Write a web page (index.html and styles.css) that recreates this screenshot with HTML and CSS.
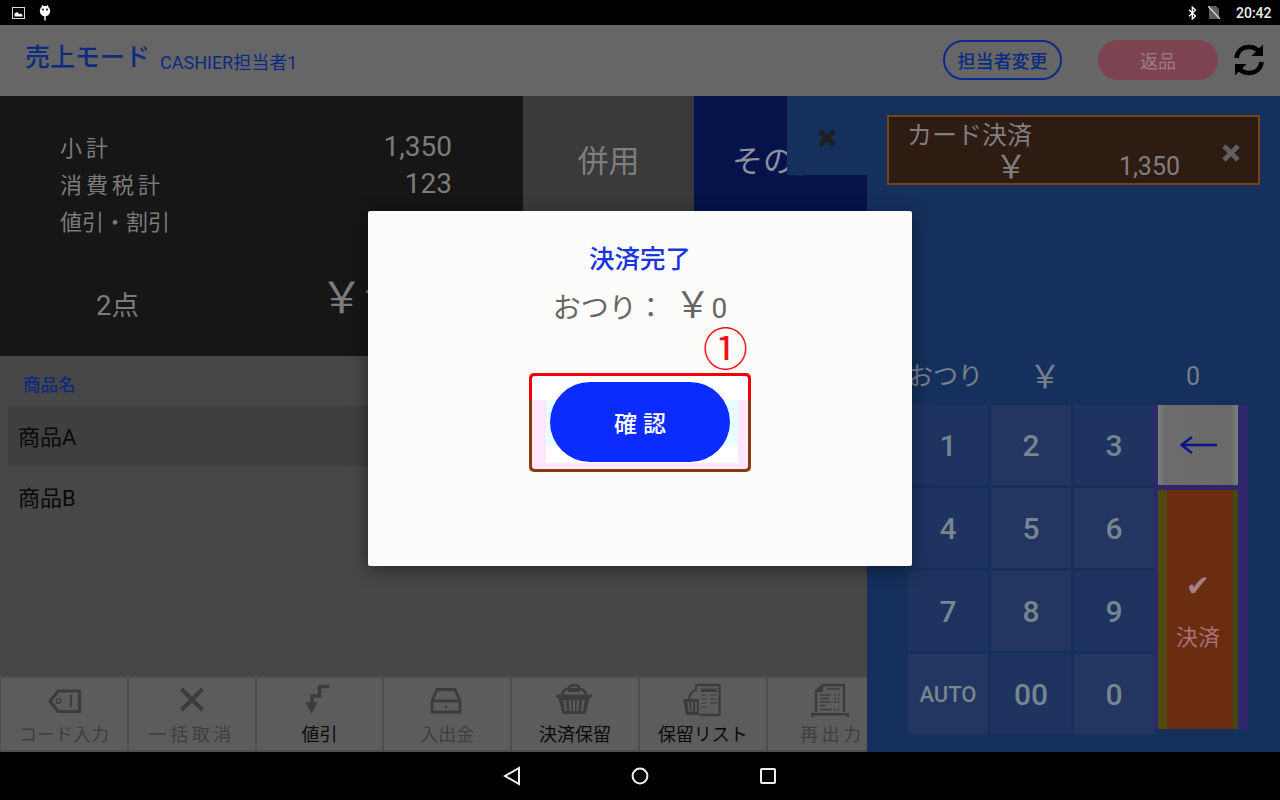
FILE: index.html
```html
<!DOCTYPE html>
<html lang="ja">
<head>
<meta charset="utf-8">
<title>売上モード</title>
<link rel="stylesheet" href="styles.css">
</head>
<body>
<div class="app">
  <div class="status">
    <svg class="st-img" viewBox="0 0 13 12"><rect x=".5" y=".5" width="12" height="11" fill="none" stroke="#ddd"/><path d="M2.5 9.5V6.5L5 5l2 2 1.5-.5L10.5 8v1.5z" fill="#fff"/></svg>
    <svg class="st-droid" viewBox="0 0 12 16"><circle cx="6" cy="6" r="5.2" fill="#fff"/><circle cx="4" cy="4.5" r="1" fill="#000"/><circle cx="8" cy="4.5" r="1" fill="#000"/><path d="M6 10v5.5M3 .5l1.5 2M9 .5 7.500 2.500" stroke="#fff" stroke-width="1.400"/></svg>
    <div class="st-space"></div>
    <svg class="st-bt" viewBox="0 0 9 14"><path d="M1 3.800 7.500 10 4.300 13V1l3.200 3L1 10.200" fill="none" stroke="#fff" stroke-width="1.300"/></svg>
    <svg class="st-sim" viewBox="0 0 12 13"><path d="M1 0H8L11 3V13H1z" fill="#5e5e5e"/><path d="M0 0 12 13" stroke="#ddd" stroke-width="1.300"/></svg>
    <span class="st-time">20:42</span>
  </div>

  <header class="head">
    <span class="head-title">売上モード</span>
    <span class="head-user">CASHIER担当者1</span>
    <div class="head-space"></div>
    <span class="btn-outline">担当者変更</span>
    <span class="btn-return">返品</span>
    <svg class="sync" viewBox="0 0 32 34"><path d="M3.500 15C4 8 9.500 4 16 4c4 0 7.500 1.500 10 4.500" fill="none" stroke="#000" stroke-width="4.500"/><path d="M30 1.500V13H18.500z" fill="#000"/><path d="M28.500 19C28 26 22.500 30 16 30c-4 0-7.500-1.500-10-4.500" fill="none" stroke="#000" stroke-width="4.500"/><path d="M2 32.500V21h11.500z" fill="#000"/></svg>
  </header>

  <main class="main">
    <section class="left">
      <div class="top">
        <div class="totals">
          <div class="t-row"><span class="t-lab sp">小計</span><span class="t-num">1,350</span></div>
          <div class="t-row"><span class="t-lab sp">消費税計</span><span class="t-num">123</span></div>
          <div class="t-row"><span class="t-lab">値引・割引</span><span class="t-num"></span></div>
          <div class="t-sum"><span class="t-count">2点</span><span class="t-total"><span class="yen">￥</span>1,350</span></div>
        </div>
        <div class="tab-mix">併用</div>
        <div class="tab-other">その他</div>
      </div>
      <div class="list">
        <div class="list-head">商品名</div>
        <div class="row row-on">商品A</div>
        <div class="row">商品B</div>
      </div>
      <nav class="tools">
        <div class="tool">
          <svg class="ti" viewBox="0 0 40 36"><path d="M14 9H35.500V29.500H14L6 19.200z" fill="none" stroke="#3c3c3c" stroke-width="3.200"/><circle cx="14.500" cy="19" r="2.300" fill="none" stroke="#3c3c3c" stroke-width="1.200"/><path d="M27 13V25" stroke="#3c3c3c" stroke-width="1.800"/></svg>
          <span class="tl tl-dim">コード入力</span>
        </div>
        <div class="tool">
          <svg class="ti" viewBox="0 0 40 36"><path d="M9.500 7 30.500 28M30.500 7 9.500 28" stroke="#3c3c3c" stroke-width="4"/></svg>
          <span class="tl tl-dim tl-wide">一括取消</span>
        </div>
        <div class="tool">
          <svg class="ti" viewBox="0 0 40 36"><path d="M30 4.500H20.500V14H13V22" fill="none" stroke="#3c3c3c" stroke-width="3.600"/><path d="M6.500 20H18.500L12.500 32z" fill="#3c3c3c"/></svg>
          <span class="tl">値引</span>
        </div>
        <div class="tool">
          <svg class="ti" viewBox="0 0 40 36"><path d="M10 7.500H28L33 19V30H5V19z M5 19H33" fill="none" stroke="#3c3c3c" stroke-width="2.800"/><circle cx="19" cy="25" r="1.300" fill="#3c3c3c"/></svg>
          <span class="tl tl-dim">入出金</span>
        </div>
        <div class="tool">
          <svg class="ti" viewBox="0 0 40 36"><path d="M7 13C8 8 11 7 13 7 14 3.500 16 3 19 3s5 .5 6 4c2 0 5 1 6 6" fill="none" stroke="#3c3c3c" stroke-width="2.600"/><path d="M13 8H25" stroke="#3c3c3c" stroke-width="4"/><path d="M1 14H37" stroke="#3c3c3c" stroke-width="3"/><path d="M3 15 7.500 32H30.500L35 15z" fill="#3c3c3c"/><path d="M9.500 18 11 29M15 18 15.700 29M19 18V29M23 18 22.300 29M28.500 18 27 29" stroke="#5c5c5c" stroke-width="2"/></svg>
          <span class="tl">決済保留</span>
        </div>
        <div class="tool">
          <svg class="ti" viewBox="0 0 40 36"><path d="M6 17C7 11 9 9 13 8V3h3" fill="none" stroke="#3c3c3c" stroke-width="2.200"/><path d="M0 17H16V33H3z" fill="#3c3c3c"/><path d="M5 20 6.500 30M9 20V30M13 20V30" stroke="#5c5c5c" stroke-width="1.600"/><path d="M16 3H36.500V33H16" fill="none" stroke="#3c3c3c" stroke-width="2.400"/><path d="M18 6.500H34V10H18z" fill="#3c3c3c"/><path d="M18 13H24M18 17H24M18 21H24M18 25H24M27 13H34M27 17H34M27 21H34" stroke="#3c3c3c" stroke-width="1.200"/></svg>
          <span class="tl">保留リスト</span>
        </div>
        <div class="tool">
          <svg class="ti" viewBox="0 0 40 36"><path d="M5 30V9L12 3H33V30" fill="none" stroke="#3c3c3c" stroke-width="2.400"/><path d="M5 10H12V3z" fill="#3c3c3c"/><path d="M0 31H38V35H35V33.500H3V35H0z" fill="#3c3c3c"/><path d="M16 7H29" stroke="#3c3c3c" stroke-width="1.500"/><path d="M9 13H20M9 16.500H18M9 20H20M9 23.500H14M9 27.500H21" stroke="#3c3c3c" stroke-width="1.600"/><path d="M23 13H30M23 16.500H30M23 20H30M23 27.500H30" stroke="#3c3c3c" stroke-width="1.600" stroke-dasharray="2 1.500"/></svg>
          <span class="tl tl-dim tl-wide tl-last">再出力</span>
        </div>
      </nav>
    </section>

    <aside class="panel">
      <div class="panel-tab"><svg class="x-dark" viewBox="0 0 18 18"><path d="M2 2 16 16M16 2 2 16" stroke="#1e1e1e" stroke-width="4.800"/></svg></div>
      <div class="card">
        <div class="card-body">
          <div class="card-title">カード決済</div>
          <div class="card-amt"><span class="yen">￥</span><span>1,350</span></div>
        </div>
        <svg class="x-grey" viewBox="0 0 18 18"><path d="M2 2 16 16M16 2 2 16" stroke="#5f5f5f" stroke-width="4.800"/></svg>
      </div>
      <div class="change"><span class="c-label">おつり</span><span class="c-yen yen">￥</span><span class="c-val">0</span></div>
      <div class="pad">
        <div class="key">1</div><div class="key key-b">2</div><div class="key">3</div>
        <div class="actions">
          <div class="back"><svg class="back-ic" viewBox="0 0 38 20"><path d="M38 10H3M13 2 2.500 10 13 18" fill="none" stroke="#0b128c" stroke-width="2.400"/></svg></div>
          <div class="settle"><span class="s-check">✔</span><span class="s-text">決済</span></div>
        </div>
        <div class="key">4</div><div class="key key-b">5</div><div class="key key-b">6</div>
        <div class="key">7</div><div class="key key-b">8</div><div class="key">9</div>
        <div class="key key-b key-auto">AUTO</div><div class="key">00</div><div class="key key-b">0</div>
      </div>
    </aside>

    <div class="modal">
      <div class="m-title">決済完了</div>
      <div class="m-change">おつり：&nbsp;<span class="yen">￥</span>0</div>
      <div class="frame">
        <span class="mark">①</span>
        <div class="frame-in"><div class="confirm">確認</div></div>
      </div>
    </div>
  </main>

  <footer class="nav">
    <svg class="nav-ic" viewBox="0 0 18 20"><path d="M16 2V18L2 10z" fill="none" stroke="#eee" stroke-width="2"/></svg>
    <svg class="nav-ic" viewBox="0 0 18 20"><circle cx="9" cy="10" r="7.400" fill="none" stroke="#eee" stroke-width="2"/></svg>
    <svg class="nav-ic" viewBox="0 0 18 20"><rect x="2" y="3" width="14" height="14" rx="1" fill="none" stroke="#eee" stroke-width="2"/></svg>
  </footer>
</div>
</body>
</html>
```
FILE: styles.css
```css
* { box-sizing: border-box; }
html, body { margin: 0; padding: 0; background: #000; }
.app {
  width: 1280px; height: 800px; overflow: hidden; display: flex; flex-direction: column;
  font-family: Roboto, "Noto Sans CJK JP", sans-serif;
}
.yen { font-size: 1.280em; font-weight: 400; line-height: 1; }

/* status bar */
.status { height: 25px; background: #000; display: flex; align-items: center; padding: 0 8px 0 12px; flex: none; }
.st-img { width: 13px; height: 12px; }
.st-droid { width: 12px; height: 16px; margin-left: 14px; }
.st-space { flex: 1; }
.st-bt { width: 9px; height: 14px; margin-right: 11px; }
.st-sim { width: 12px; height: 13px; margin-right: 16px; }
.st-time { color: #eee; font-size: 14px; font-weight: 500; width: 36px; }

/* header */
.head { height: 71px; background: #666; display: flex; align-items: center; padding: 0 15px 0 25px; flex: none; }
.head-title { color: #0c2a80; font-size: 25px; font-weight: 500; line-height: 30px; margin-top: -6px; width: 135px; }
.head-user { color: #0c2a80; font-size: 18px; }
.head-space { flex: 1; }
.btn-outline {
  width: 119px; height: 40px; border: 2px solid #0b2a8e; border-radius: 20px; color: #0c2a80;
  font-size: 18px; font-weight: 500; display: flex; align-items: center; justify-content: center; margin-top: -1px;
}
.btn-return {
  width: 120px; height: 40px; margin-left: 36px; border-radius: 20px; background: #7d4351; color: #9f7c82;
  font-size: 18px; display: flex; align-items: center; justify-content: center; margin-top: -1px;
}
.sync { width: 32px; height: 34px; margin-left: 15px; margin-top: -2px; }

/* main area */
.main { height: 656px; display: flex; position: relative; flex: none; }
.left { width: 867px; display: flex; flex-direction: column; flex: none; }
.top { height: 260px; display: flex; flex: none; }
.totals { width: 523px; background: #161616; padding: 32px 0 0 60px; color: #7b7b7b; font-size: 22px; }
.t-row { width: 392px; height: 37px; display: flex; justify-content: space-between; align-items: center; }
.t-lab { margin-top: -2px; }
.sp { letter-spacing: 4px; }
.t-num { font-size: 28px; color: #7c7c7c; }
.t-sum { display: flex; align-items: center; margin-top: 40px; height: 48px; padding-left: 36px; }
.t-count { font-size: 27.500px; width: 232px; }
.t-total { font-size: 36px; white-space: nowrap; margin-top: -8px; }
.t-total .yen { font-size: 1.200em; margin-left: -8px; }
.tab-mix { width: 171px; background: #3a3a3a; color: #7e7e7e; font-size: 31px; line-height: 36px; padding-top: 48px; text-align: center; }
.tab-other { width: 173px; background: #05134a; color: #8f909c; font-size: 31px; line-height: 36px; padding: 48px 0 0 38px; white-space: nowrap; }

.list { flex: 1; background: #474747; padding: 0 0 0 8px; }
.list-head { height: 49px; padding: 16px 0 0 15px; color: #0c2a80; font-size: 17.500px; font-weight: 500; line-height: 26px; }
.row { height: 60px; line-height: 64px; padding-left: 10px; font-size: 22px; color: #0a0a0a; margin-top: 1px; }
.row-on { background: #3f3f3f; }

.tools { height: 76px; flex: none; background: #4d4d4d; display: flex; gap: 2px; padding: 2px 0 2px 1px; overflow: hidden; }
.tool { width: 125.800px; flex: none; background: #5c5c5c; display: flex; flex-direction: column; align-items: center; padding-top: 4px; }
.ti { width: 40px; height: 36px; flex: none; }
.tl { font-size: 18px; line-height: 22px; margin-top: 6px; color: #0a0a0a; white-space: nowrap; }
.tl-dim { color: #3f3f3f; }
.tl-wide { letter-spacing: 3.500px; }
.tl-last { padding-left: 3px; }

/* right panel */
.panel { flex: 1; background: #15305c; position: relative; padding-top: 19px; }
.panel-tab { position: absolute; left: -80px; top: 0; width: 80px; height: 79px; background: #15305c; display: flex; align-items: center; justify-content: center; }
.x-dark { width: 18px; height: 18px; margin-top: 4px; }
.card { margin-left: 20px; width: 373px; height: 70px; border: 2px solid #7a4315; background: #2e1b12; display: flex; align-items: center; padding-left: 18px; color: #7f7f7f; }
.card-body { width: 273px; }
.card-title { font-size: 25px; line-height: 32px; margin-top: 1px; }
.card-amt { display: flex; justify-content: space-between; align-items: center; padding-left: 88px; font-size: 25px; line-height: 29px; height: 29px; }
.x-grey { width: 18px; height: 18px; margin-left: 42px; margin-top: 5px; }
.change { margin: 177px 0 13px 41px; height: 30px; display: flex; align-items: center; color: #757f8d; font-size: 25px; line-height: 30px; }
.c-label { width: 100px; white-space: nowrap; }
.c-yen { width: 74px; text-align: center; }
.c-val { width: 74px; margin-left: 74px; text-align: center; }

.pad { margin-left: 41px; display: grid; grid-template-columns: 80px 80px 80px 91px; grid-auto-rows: 80px; gap: 3px; }
.key { background: #1e3360; color: #75868f; font-size: 30px; font-weight: 500; display: flex; align-items: center; justify-content: center; }
.key-b { background: #223661; }
.key-auto { font-size: 22px; }
.actions { grid-column: 4; grid-row: 1 / span 4; margin-left: -4px; height: 324px; background: #2f2769; padding-left: 5px; display: flex; flex-direction: column; gap: 5px; }
.back { width: 80px; height: 80px; flex: none; background: linear-gradient(90deg, #78827c, #6c6c6c 8%, #6a6a6a 92%, #78827c); display: flex; align-items: center; justify-content: center; }
.back-ic { width: 38px; height: 20px; }
.settle {
  width: 80px; flex: 1; display: flex; flex-direction: column; align-items: center; justify-content: center;
  background: linear-gradient(90deg, #514812 0 9px, #6a2d10 9px 75px, #3f4a10 75px);
  color: #a87076; padding-top: 4px;
}
.s-check { font-family: "DejaVu Sans", sans-serif; font-size: 29px; line-height: 30px; color: #a97e88; }
.s-text { font-size: 22px; line-height: 30px; margin-top: 22px; }

/* dialog */
.modal {
  position: absolute; left: 368px; top: 115px; width: 544px; height: 355px; background: #fcfcfa;
  box-shadow: 0 4px 18px rgba(0, 0, 0, .45); display: flex; flex-direction: column; align-items: center; border-radius: 2px;
}
.m-title { font-size: 25.500px; font-weight: 500; line-height: 30px; color: #1a35e0; margin-top: 33px; }
.m-change { font-size: 28px; height: 38px; line-height: 38px; color: #666; margin-top: 15px; white-space: nowrap; }
.m-change .yen { margin: 0 1px 0 3px; }
.frame {
  position: relative; width: 222px; height: 99px; margin-top: 46px; padding: 3px; border-radius: 5px;
  background: linear-gradient(180deg, #f40000 0 27px, #8b3a10 27px);
}
.frame-in {
  height: 93px; border-radius: 3px; padding-top: 6px; display: flex; justify-content: center;
  background:
    linear-gradient(180deg, #fff 0 24px, transparent 24px),
    linear-gradient(90deg, #ffe6fa 0 14px, transparent 14px 206px, #ffe6fa 206px),
    linear-gradient(180deg, #e8ffff 0 70px, #fff 70px 87px, #ffe6fa 87px);
}
.confirm { width: 180px; height: 80px; border-radius: 40px; background: #0b2bff; color: #fff; font-size: 23px; font-weight: 500; letter-spacing: 6px; padding-left: 6px; display: flex; align-items: center; justify-content: center; }
.mark { position: absolute; left: 174px; top: -45px; font-size: 45px; font-weight: 400; line-height: 38px; color: #f01020; font-family: "Noto Sans CJK JP", sans-serif; }

/* nav bar */
.nav { height: 48px; background: #000; display: flex; justify-content: center; align-items: center; gap: 110px; flex: none; padding-right: 1px; }
.nav-ic { width: 18px; height: 20px; }
```
